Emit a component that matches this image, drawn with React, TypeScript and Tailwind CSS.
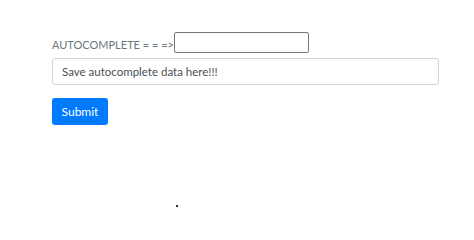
import React from "react";

export default function App() {
  return (
    <div className="w-[474px] h-[221px] bg-white pl-[52px] pt-[32px] font-['Lato',sans-serif]">
      <div className="flex items-center">
        <label className="text-[11px] text-[#6c757d] leading-none pt-[3px]">AUTOCOMPLETE = = =&gt;</label>
        <input
          type="text"
          className="w-[135px] h-[21px] border border-[#767676] rounded-[2px] outline-none"
        />
      </div>
      <input
        type="text"
        defaultValue="Save autocomplete data here!!!"
        className="mt-[5px] block w-[387px] h-[27px] border border-[#ced4da] rounded-[3px] px-[9px] text-[11.5px] text-[#495057] outline-none"
      />
      <button className="mt-[13px] block w-[56px] h-[27px] bg-[#007bff] text-white text-[12px] rounded-[3px]">
        Submit
      </button>
      <div className="ml-[124px] mt-[80px] w-[2px] h-[2px] bg-[#2a2a4a]" />
    </div>
  );
}
